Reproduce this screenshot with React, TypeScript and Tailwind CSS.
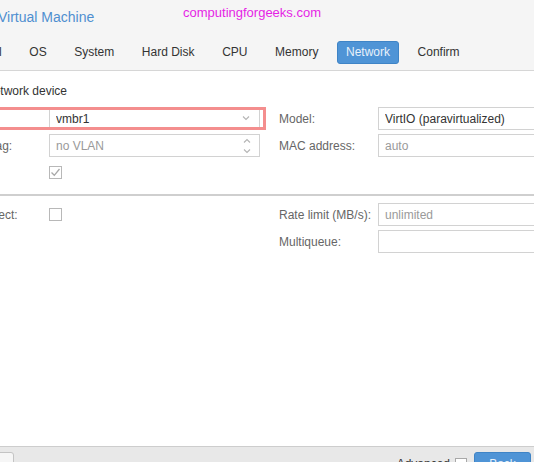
import React from 'react';

const TABS = ['General', 'OS', 'System', 'Hard Disk', 'CPU', 'Memory', 'Network', 'Confirm'];

function Chevron({ up = false }: { up?: boolean }) {
  return (
    <svg width="8" height="5" viewBox="0 0 8 5" className="block">
      <path
        d={up ? 'M1 4.5 L4 1.5 L7 4.5' : 'M1 0.5 L4 3.5 L7 0.5'}
        fill="none"
        stroke="#b4b4b4"
        strokeWidth="1.1"
      />
    </svg>
  );
}

function Field({ value, placeholder, trigger, wide }: { value?: string; placeholder?: string; trigger?: React.ReactNode; wide?: boolean }) {
  return (
    <div
      className={`h-[23px] ${wide ? 'w-[220px]' : 'w-[211px]'} shrink-0 flex items-center border border-[#d2d2d2] bg-white pl-[6px] pr-[9px]`}
    >
      <span className={`flex-1 truncate ${value ? 'text-[#333]' : 'text-[#9a9a9a]'}`}>{value ?? placeholder}</span>
      {trigger}
    </div>
  );
}

function Check({ checked }: { checked?: boolean }) {
  return (
    <div className="w-[13px] h-[13px] border border-[#b8b8b8] bg-white flex items-center justify-center">
      {checked && (
        <svg width="11" height="11" viewBox="0 0 11 11">
          <path d="M1.5 5.5 L4.3 8.3 L9.5 2" fill="none" stroke="#a8a8a8" strokeWidth="1.3" />
        </svg>
      )}
    </div>
  );
}

function LeftRow({ label, children }: { label: string; children: React.ReactNode }) {
  return (
    <div className="h-[23px] flex items-center">
      <span className="w-[94px] shrink-0 text-[#666] whitespace-nowrap">{label}</span>
      {children}
    </div>
  );
}

function RightRow({ label, children }: { label: string; children: React.ReactNode }) {
  return (
    <div className="h-[23px] flex items-center">
      <span className="w-[99px] shrink-0 text-[#666] whitespace-nowrap">{label}</span>
      {children}
    </div>
  );
}

export default function App() {
  return (
    <div className="w-[534px] h-[462px] overflow-hidden bg-white font-['Liberation_Sans',Arial,sans-serif] text-[12px] text-[#333]">
      {/* Header with title and wizard tabs */}
      <div className="relative h-[71px] bg-[#f5f5f5] border-b border-[#d6d6d6]">
        <div className="h-[34px] flex items-center">
          <span className="ml-[-2px] text-[14px] text-[#4f8fd0] whitespace-nowrap">Virtual Machine</span>
        </div>
        <span className="absolute left-[183px] top-[3px] text-[13px] text-[#e51fe5] whitespace-nowrap">computingforgeeks.com</span>
        <div className="h-[36px] flex items-center gap-[9.6px] ml-[-50px] whitespace-nowrap">
          {TABS.map((t) => (
            <div
              key={t}
              className={
                t === 'Network'
                  ? 'h-[23px] px-[8px] flex items-center rounded-[3px] border border-[#3f84c6] bg-[#4f94d6] text-[#e8f1fa]'
                  : 'h-[23px] px-[9px] flex items-center text-[#333]'
              }
            >
              {t}
            </div>
          ))}
        </div>
      </div>

      {/* Form body */}
      <div className="h-[375px] bg-white">
        <div className="pt-[13px] h-[27px] leading-[14px] ml-[-15px] text-[#333] whitespace-nowrap">Network device</div>

        <div className="mt-[9px] flex gap-[19px] ml-[-45px]">
          <div className="flex flex-col gap-[4px] w-[305px] shrink-0">
            <div className="relative">
              <LeftRow label="Bridge:">
                <Field value="vmbr1" trigger={<Chevron />} />
              </LeftRow>
              <div className="absolute top-0 bottom-0 left-[20px] right-[-6px] border-[3px] border-[#f48e8e]" />
            </div>
            <LeftRow label="VLAN Tag:">
              <Field
                placeholder="no VLAN"
                trigger={
                  <div className="flex flex-col gap-[6px] mr-[-1px]">
                    <Chevron up />
                    <Chevron />
                  </div>
                }
              />
            </LeftRow>
            <LeftRow label="Firewall:">
              <Check checked />
            </LeftRow>
          </div>
          <div className="flex flex-col gap-[4px] shrink-0">
            <RightRow label="Model:">
              <Field value="VirtIO (paravirtualized)" wide />
            </RightRow>
            <RightRow label="MAC address:">
              <Field placeholder="auto" wide />
            </RightRow>
          </div>
        </div>

        <div className="mt-[10px] border-t-2 border-[#cfcfcf]" />

        <div className="mt-[7px] flex gap-[19px] ml-[-45px]">
          <div className="flex flex-col gap-[4px] w-[305px] shrink-0">
            <LeftRow label="Disconnect:">
              <Check />
            </LeftRow>
          </div>
          <div className="flex flex-col gap-[4px] shrink-0">
            <RightRow label="Rate limit (MB/s):">
              <Field placeholder="unlimited" wide />
            </RightRow>
            <RightRow label="Multiqueue:">
              <Field wide />
            </RightRow>
          </div>
        </div>
      </div>

      {/* Footer buttons */}
      <div className="h-[40px] bg-[#e8e8e8] border-t border-[#cdcdcd] pt-[5px] flex items-start">
        <div className="ml-[-46px] w-[60px] h-[24px] rounded-[3px] border border-[#c4c4c4] bg-[#f6f6f6] flex items-center justify-center shrink-0">
          Help
        </div>
        <div className="flex-1" />
        <div className="h-[24px] flex items-center shrink-0">
          <span className="text-[#333]">Advanced</span>
          <div className="ml-[5px] w-[12px] h-[12px] border border-[#a8a8a8] bg-white" />
          <div className="ml-[7px] w-[57px] h-[24px] rounded-[3px] border border-[#3f84c6] bg-[#4f94d6] text-[#e8f1fa] flex items-center justify-center">
            Back
          </div>
          <div className="ml-[4px] mr-[-58px] w-[57px] h-[24px] rounded-[3px] border border-[#3f84c6] bg-[#4f94d6] text-[#e8f1fa] flex items-center justify-center">
            Next
          </div>
        </div>
      </div>
    </div>
  );
}
